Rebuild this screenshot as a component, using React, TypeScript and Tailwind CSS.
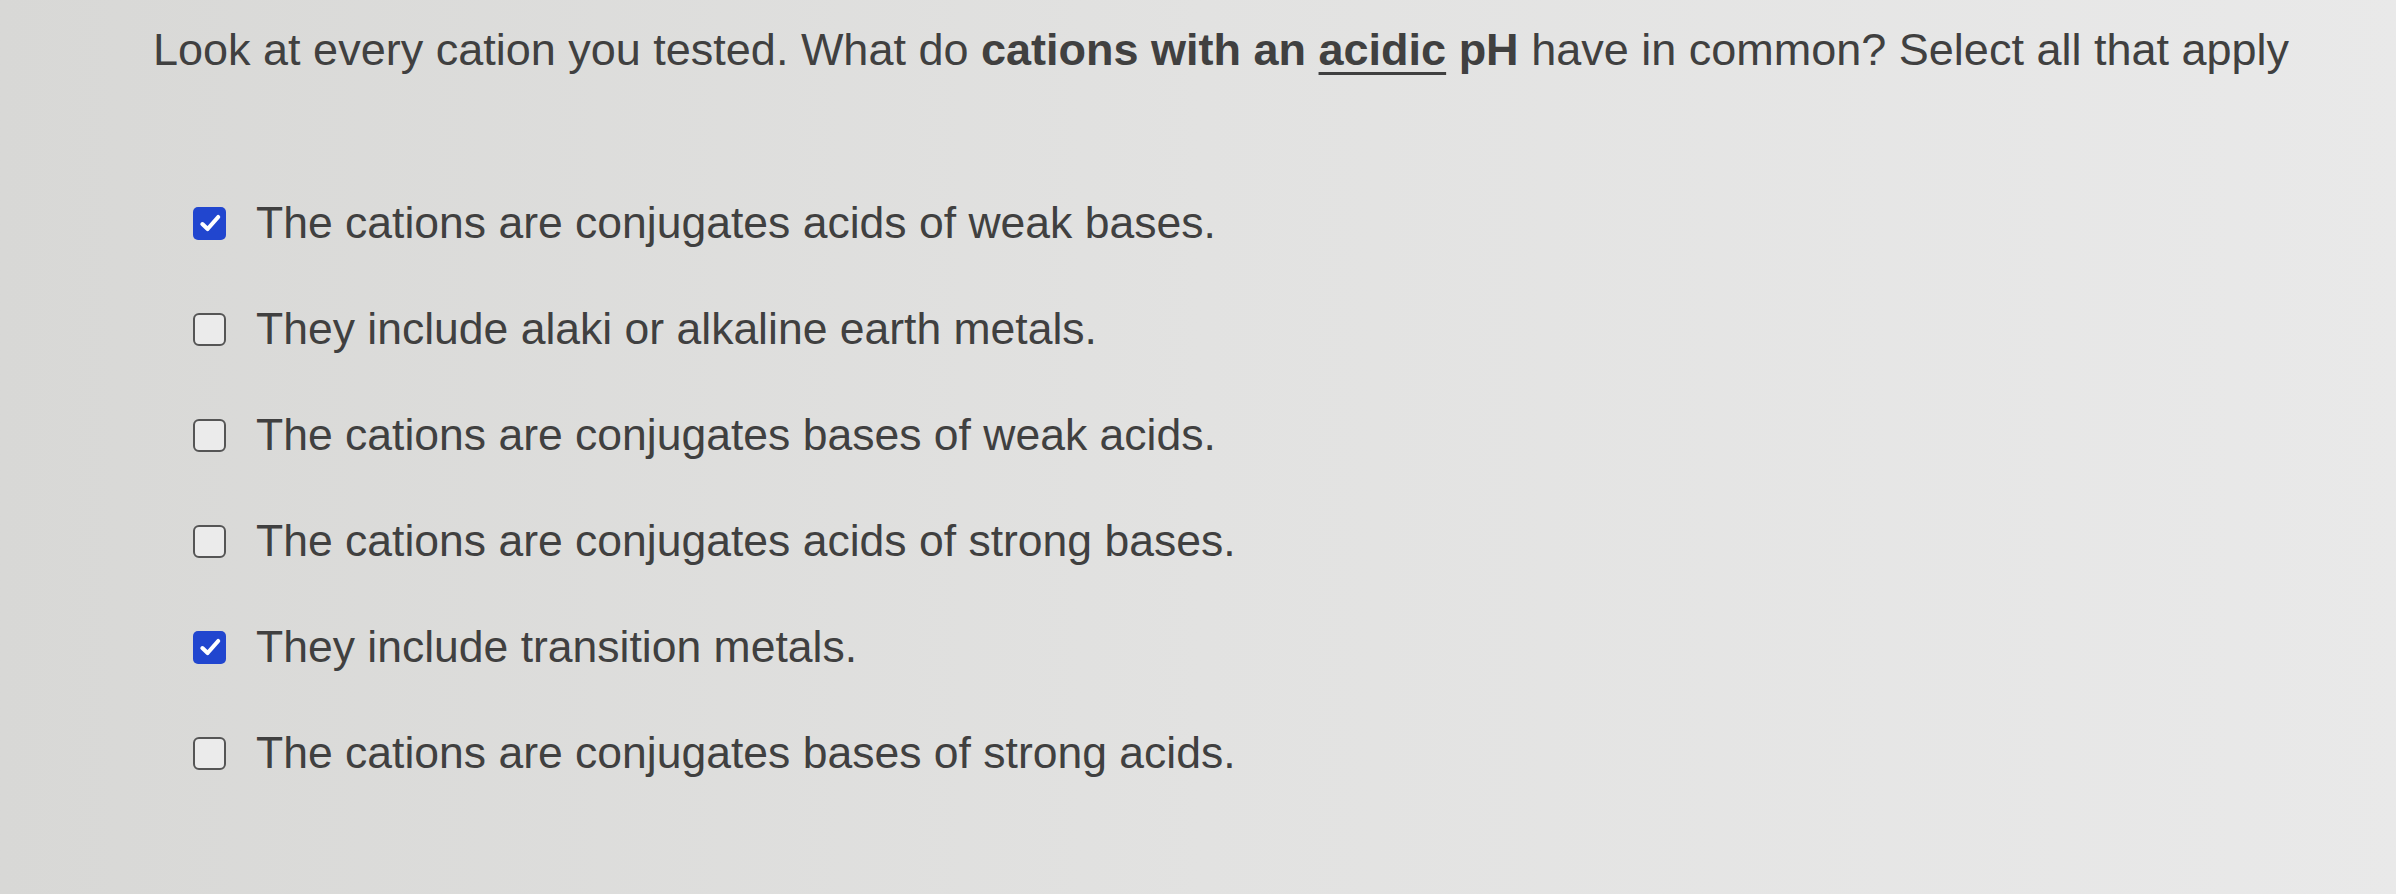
import React from 'react';

interface Option {
  id: number;
  label: string;
  checked: boolean;
}

const options: Option[] = [
  { id: 1, label: 'The cations are conjugates acids of weak bases.', checked: true },
  { id: 2, label: 'They include alaki or alkaline earth metals.', checked: false },
  { id: 3, label: 'The cations are conjugates bases of weak acids.', checked: false },
  { id: 4, label: 'The cations are conjugates acids of strong bases.', checked: false },
  { id: 5, label: 'They include transition metals.', checked: true },
  { id: 6, label: 'The cations are conjugates bases of strong acids.', checked: false },
];

const CheckBox: React.FC<{ checked: boolean }> = ({ checked }) => {
  if (checked) {
    return (
      <span className="flex h-[33px] w-[33px] flex-shrink-0 items-center justify-center rounded-[5px] bg-[#2146cf]">
        <svg width="24" height="24" viewBox="0 0 22 22" fill="none">
          <path d="M4 12 L8.8 16.5 L18.5 5.5" stroke="white" strokeWidth="3.8" strokeLinecap="round" strokeLinejoin="round" />
        </svg>
      </span>
    );
  }
  return <span className="h-[33px] w-[33px] flex-shrink-0 rounded-[6px] border-[2.5px] border-[#555555] bg-[#ebebeb]" />;
};

export default function App() {
  return (
    <div
      className="h-[894px] w-full overflow-hidden bg-gradient-to-r from-[#d8d8d6] via-[#e2e2e1] to-[#e9e9e9] pl-[153px] pt-[24px] text-[#404040]"
      style={{ fontFamily: '"Liberation Sans", Arial, sans-serif' }}
    >
      <h1 className="text-[45px] leading-[52px] font-normal whitespace-nowrap">
        Look at every cation you tested. What do{' '}
        <span className="font-bold">
          cations with an <span className="underline decoration-[3px] underline-offset-[7px]">acidic</span> pH
        </span>{' '}
        have in common? Select all that apply
      </h1>

      <div className="mt-[94px] flex flex-col pl-[40px]">
        {options.map((opt) => (
          <label key={opt.id} className="flex h-[106px] items-center gap-[30px]">
            <CheckBox checked={opt.checked} />
            <span className="text-[44.5px] leading-[52px] whitespace-nowrap">{opt.label}</span>
          </label>
        ))}
      </div>
    </div>
  );
}
